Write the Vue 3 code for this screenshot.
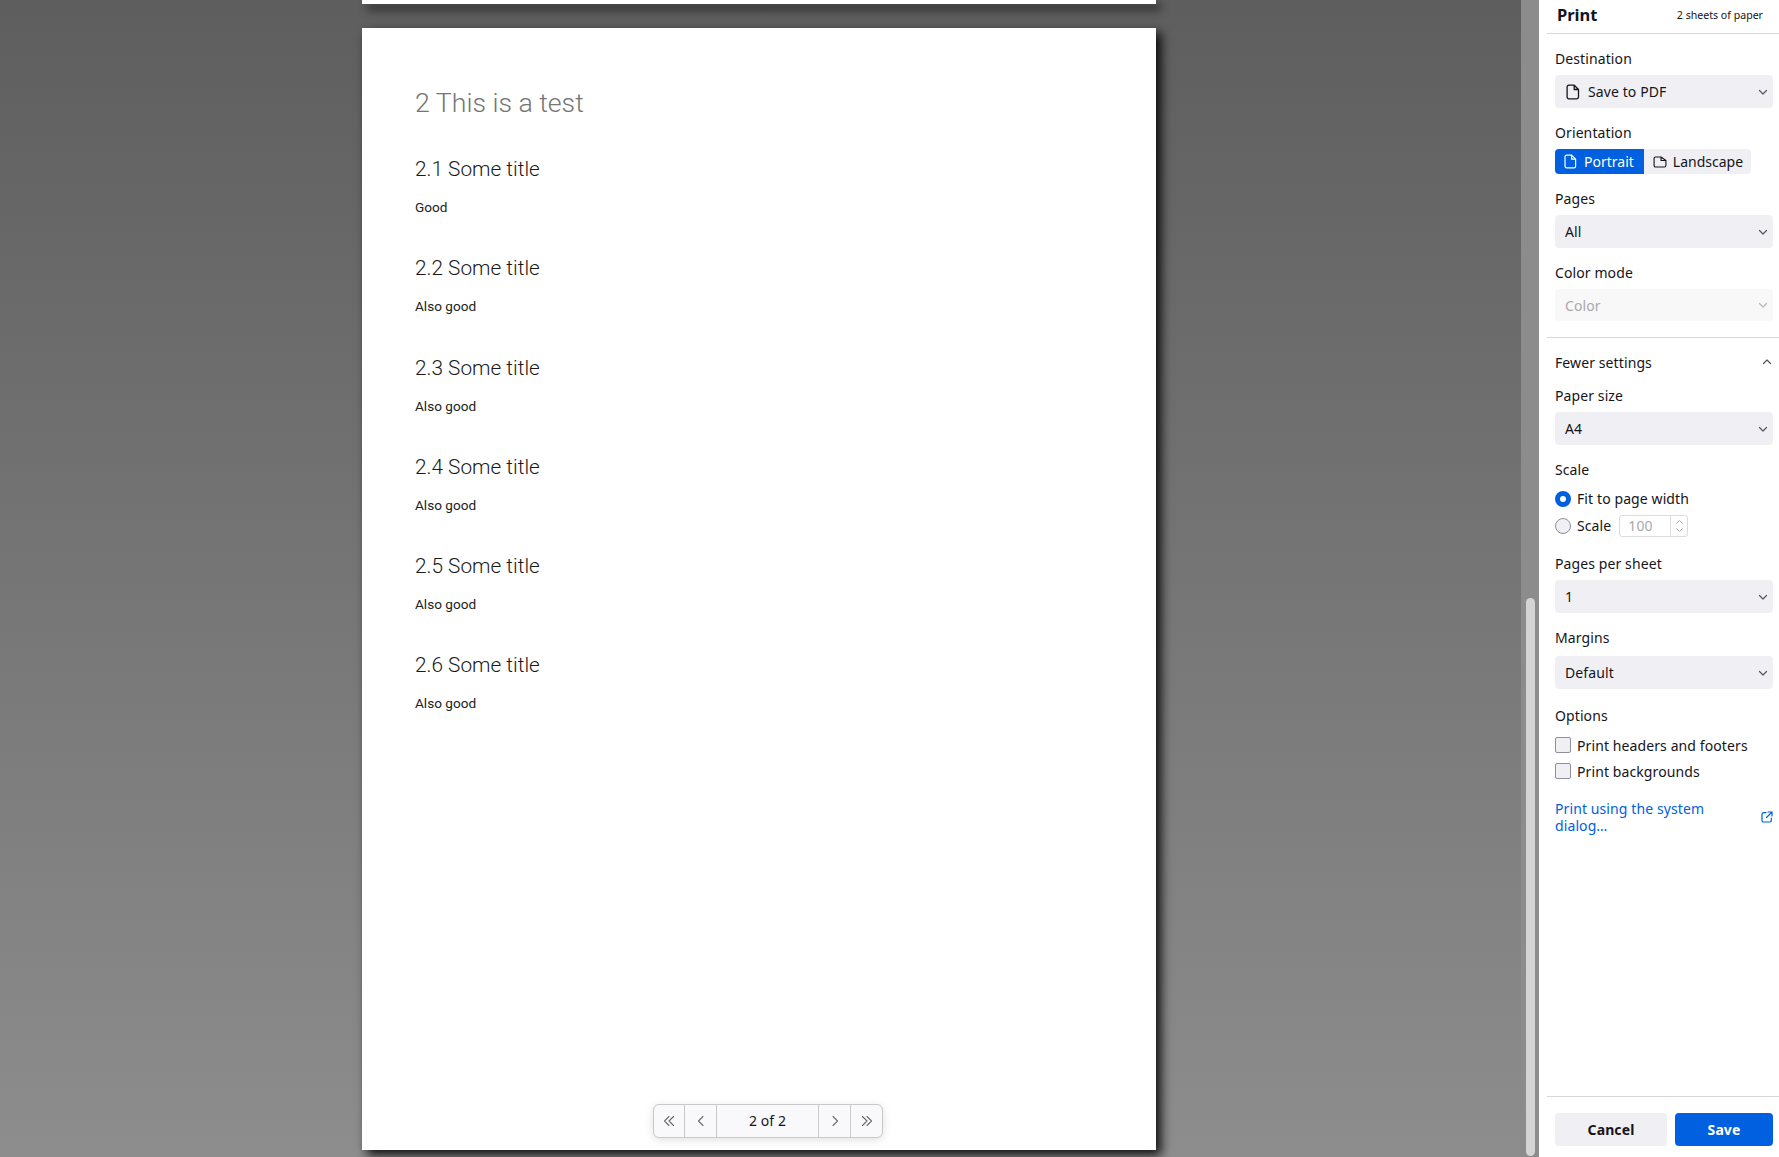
<script setup>
const sections = [
  { title: '2.1 Some title', body: 'Good' },
  { title: '2.2 Some title', body: 'Also good' },
  { title: '2.3 Some title', body: 'Also good' },
  { title: '2.4 Some title', body: 'Also good' },
  { title: '2.5 Some title', body: 'Also good' },
  { title: '2.6 Some title', body: 'Also good' },
]
</script>

<template>
  <div class="app">
    <svg class="defs" width="0" height="0" aria-hidden="true">
      <symbol id="chev" viewBox="0 0 12 12"><path d="M2.5 4.5 6 8l3.5-3.5" fill="none" stroke="currentColor" stroke-width="1.2" stroke-linecap="round" stroke-linejoin="round" /></symbol>
      <symbol id="doc" viewBox="0 0 14 16"><path d="M2.8 1.2h5.4l4.3 4.3v7.6a1.7 1.7 0 0 1-1.7 1.7H2.8a1.7 1.7 0 0 1-1.7-1.7V2.9a1.7 1.7 0 0 1 1.7-1.7Z M8.2 1.2v4.3h4.3" fill="none" stroke="currentColor" stroke-width="1.3" stroke-linejoin="round" /></symbol>
      <symbol id="land" viewBox="0 0 16 14"><path d="M2.8 1.1h6.4l5.7 4.2v5.9a1.7 1.7 0 0 1-1.7 1.7H2.8a1.7 1.7 0 0 1-1.7-1.7V2.8a1.7 1.7 0 0 1 1.7-1.7Z M9.2 1.1v4.2h5.7" fill="none" stroke="currentColor" stroke-width="1.3" stroke-linejoin="round" /></symbol>
    </svg>

    <main class="preview">
      <div class="sheet sheet-prev"></div>
      <article class="sheet">
        <h1>2 This is a test</h1>
        <section v-for="s in sections" :key="s.title" class="sec">
          <h2>{{ s.title }}</h2>
          <p>{{ s.body }}</p>
        </section>
      </article>

      <nav class="pager">
        <button class="pg-btn">
          <svg width="14" height="14" viewBox="0 0 14 14"><path d="M7 2.5 2.5 7 7 11.5M11.5 2.5 7 7l4.5 4.5" fill="none" stroke="currentColor" stroke-width="1.1" stroke-linecap="round" stroke-linejoin="round" /></svg>
        </button>
        <button class="pg-btn">
          <svg width="14" height="14" viewBox="0 0 14 14"><path d="M9 2.5 4.5 7 9 11.5" fill="none" stroke="currentColor" stroke-width="1.1" stroke-linecap="round" stroke-linejoin="round" /></svg>
        </button>
        <span class="pg-label">2 of 2</span>
        <button class="pg-btn">
          <svg width="14" height="14" viewBox="0 0 14 14"><path d="M5 2.5 9.5 7 5 11.5" fill="none" stroke="currentColor" stroke-width="1.1" stroke-linecap="round" stroke-linejoin="round" /></svg>
        </button>
        <button class="pg-btn">
          <svg width="14" height="14" viewBox="0 0 14 14"><path d="M2.5 2.5 7 7l-4.5 4.5M7 2.5 11.5 7 7 11.5" fill="none" stroke="currentColor" stroke-width="1.1" stroke-linecap="round" stroke-linejoin="round" /></svg>
        </button>
      </nav>
    </main>

    <div class="scrollbar"><div class="thumb"></div></div>

    <aside class="panel">
      <header class="head">
        <strong>Print</strong>
        <span>2 sheets of paper</span>
      </header>

      <div class="body">
        <div class="group">
          <label class="lbl">Destination</label>
          <div class="select">
            <svg class="sel-icon" width="14" height="16"><use href="#doc" /></svg>
            <span>Save to PDF</span>
            <svg class="chev" width="12" height="12"><use href="#chev" /></svg>
          </div>
        </div>

        <div class="group">
          <label class="lbl">Orientation</label>
          <div class="orient">
            <button class="orient-btn on">
              <svg width="13" height="15"><use href="#doc" /></svg>Portrait
            </button>
            <button class="orient-btn">
              <svg width="14" height="12"><use href="#land" /></svg>Landscape
            </button>
          </div>
        </div>

        <div class="group">
          <label class="lbl">Pages</label>
          <div class="select"><span>All</span><svg class="chev" width="12" height="12"><use href="#chev" /></svg></div>
        </div>

        <div class="group last">
          <label class="lbl">Color mode</label>
          <div class="select disabled"><span>Color</span><svg class="chev" width="12" height="12"><use href="#chev" /></svg></div>
        </div>
      </div>

      <div class="rule"></div>

      <div class="body more">
        <div class="fewer">
          <span>Fewer settings</span>
          <svg class="chev up" width="12" height="12"><use href="#chev" /></svg>
        </div>

        <div class="group">
          <label class="lbl">Paper size</label>
          <div class="select"><span>A4</span><svg class="chev" width="12" height="12"><use href="#chev" /></svg></div>
        </div>

        <div class="group">
          <label class="lbl tight">Scale</label>
          <div class="row"><span class="radio on"></span>Fit to page width</div>
          <div class="row">
            <span class="radio"></span>Scale
            <span class="num">
              <span class="num-val">100</span>
              <span class="spin">
                <svg width="9" height="6" viewBox="0 0 9 6"><path d="M1.5 4.5 4.5 1.5l3 3" fill="none" stroke="currentColor" stroke-linecap="round" stroke-linejoin="round" /></svg>
                <svg width="9" height="6" viewBox="0 0 9 6"><path d="M1.5 1.5l3 3 3-3" fill="none" stroke="currentColor" stroke-linecap="round" stroke-linejoin="round" /></svg>
              </span>
            </span>
          </div>
        </div>

        <div class="group">
          <label class="lbl">Pages per sheet</label>
          <div class="select"><span>1</span><svg class="chev" width="12" height="12"><use href="#chev" /></svg></div>
        </div>

        <div class="group margins">
          <label class="lbl gap8">Margins</label>
          <div class="select"><span>Default</span><svg class="chev" width="12" height="12"><use href="#chev" /></svg></div>
        </div>

        <div class="group">
          <label class="lbl">Options</label>
          <div class="row check-row"><span class="check"></span>Print headers and footers</div>
          <div class="row check-row"><span class="check"></span>Print backgrounds</div>
        </div>

        <div class="link">
          <span>Print using the system dialog…</span>
          <svg width="12" height="12" viewBox="0 0 12 12"><path d="M5 1.7H2.4A1.4 1.4 0 0 0 1 3.1v6.5A1.4 1.4 0 0 0 2.4 11h6.5a1.4 1.4 0 0 0 1.4-1.4V7M7 1h4v4M11 1 5.5 6.5" fill="none" stroke="currentColor" stroke-width="1.2" stroke-linecap="round" stroke-linejoin="round" /></svg>
        </div>
      </div>

      <footer class="foot">
        <button class="btn">Cancel</button>
        <button class="btn primary">Save</button>
      </footer>
    </aside>
  </div>
</template>

<style>
html, body { margin: 0; height: 100%; overflow: hidden; }
</style>

<style scoped>
.app {
  display: flex;
  width: 1779px;
  height: 1157px;
  overflow: hidden;
  font-family: "Noto Sans", "Open Sans", sans-serif;
  font-size: 14px;
  letter-spacing: 0.1px;
  color: #15141a;
}
.defs { position: absolute; }
button { font: inherit; color: inherit; border: 0; padding: 0; letter-spacing: inherit; }

.preview {
  position: relative;
  flex: 1;
  display: flex;
  flex-direction: column;
  align-items: center;
  gap: 24px;
  padding-right: 3px;
  overflow: hidden;
  background: linear-gradient(to bottom, #5e5e5e, #8d8d8d);
}
.sheet {
  flex: none;
  box-sizing: border-box;
  width: 794px;
  height: 1122px;
  padding: 57px 53px 0;
  background: #fff;
  box-shadow: 5px 5px 10px rgba(0, 0, 0, 0.9);
  font-family: Roboto, sans-serif;
  letter-spacing: 0;
}
.sheet-prev { height: 4px; padding: 0; }
h1 {
  margin: 0 0 33px;
  font-size: 26.7px;
  line-height: 36px;
  font-weight: 300;
  color: #757575;
}
.sec { height: 99.3px; }
h2 {
  margin: 0 0 13px;
  font-size: 20.8px;
  line-height: 30px;
  font-weight: 300;
  color: #1a1a1a;
}
p {
  margin: 0;
  font-size: 13.6px;
  line-height: 20px;
  color: #222;
}

.pager {
  position: absolute;
  left: 653px;
  top: 1104px;
  display: flex;
  height: 34px;
  box-sizing: border-box;
  border: 1px solid #c9c9cc;
  border-radius: 6px;
  background: #f9f9fb;
  box-shadow: 0 2px 8px rgba(0, 0, 0, 0.12);
  overflow: hidden;
  font-family: "Noto Sans", sans-serif;
}
.pg-btn {
  width: 32px;
  display: flex;
  align-items: center;
  justify-content: center;
  background: transparent;
  color: #6a6a72;
  border-right: 1px solid #c9c9cc;
}
.pg-btn:first-child { width: 31px; }
.pg-btn:last-child { width: 31px; border-right: 0; }
.pg-label {
  width: 102px;
  box-sizing: border-box;
  border-right: 1px solid #c9c9cc;
  line-height: 32px;
  text-align: center;
}

.scrollbar {
  flex: none;
  position: relative;
  width: 18px;
  background: #8c8c8c;
}
.thumb {
  position: absolute;
  left: 5px;
  top: 598px;
  bottom: 1px;
  width: 9px;
  border-radius: 5px;
  background: #d4d4d4;
}

.panel {
  flex: none;
  width: 240px;
  display: flex;
  flex-direction: column;
  background: #fff;
}
.head {
  display: flex;
  align-items: center;
  justify-content: space-between;
  height: 33px;
  box-sizing: content-box;
  margin-left: 8px;
  padding: 0 16px 0 10px;
  border-bottom: 1px solid #d7d7db;
}
.head > * { position: relative; top: -2px; }
.head strong { font-size: 16.5px; font-weight: 700; letter-spacing: 0; }
.head span { font-size: 10.6px; letter-spacing: 0; }
.body {
  display: flex;
  flex-direction: column;
  gap: 15px;
  padding: 15px 6px 0 16px;
}
.group { display: flex; flex-direction: column; }
.group.last { padding-bottom: 16px; }
.lbl { height: 20px; line-height: 20px; margin-bottom: 6px; }
.lbl.gap8 { margin-bottom: 8px; }
.lbl.tight { margin-bottom: 5px; }
.select {
  display: flex;
  align-items: center;
  height: 33px;
  padding: 0 4px 0 10px;
  box-sizing: border-box;
  border-radius: 4px;
  background: #f0f0f4;
}
.sel-icon { margin: 0 8px 0 1px; }
.select .chev { margin-left: auto; color: #55555f; }
.select.disabled { height: 32px; background: #f8f8f9; color: #a9a9ad; }
.select.disabled .chev { color: #b5b5b9; }
.orient { display: flex; letter-spacing: 0; }
.orient-btn {
  display: flex;
  align-items: center;
  gap: 6px;
  height: 25px;
  box-sizing: border-box;
  padding: 0 8px 0 9px;
  background: #f0f0f4;
  border-radius: 0 4px 4px 0;
}
.orient-btn.on {
  gap: 7px;
  padding-right: 10px;
  background: #0060df;
  color: #fff;
  border-radius: 4px 0 0 4px;
}
.rule { height: 1px; margin-left: 8px; background: #d7d7db; }
.more { padding-top: 14px; gap: 0; }
.more .group { margin-bottom: 15px; }
.more .group.margins { margin-bottom: 17px; }
.fewer {
  display: flex;
  align-items: center;
  justify-content: space-between;
  height: 20px;
  margin-bottom: 14px;
}
.fewer .chev { color: #55555f; }
.chev.up { transform: rotate(180deg); }
.row {
  display: flex;
  align-items: center;
  height: 27px;
  gap: 6px;
}
.radio {
  flex: none;
  width: 16px;
  height: 16px;
  box-sizing: border-box;
  border: 1px solid #8f8f9d;
  border-radius: 50%;
  background: #f0f0f4;
}
.radio.on { border: 5px solid #0060df; background: #fff; }
.num {
  display: flex;
  width: 69px;
  height: 22px;
  margin-left: 2px;
  box-sizing: border-box;
  border: 1px solid #dcdcde;
  border-radius: 3px;
  color: #a9a9ad;
}
.num-val { flex: 1; padding-left: 8px; line-height: 20px; }
.spin {
  width: 16px;
  display: flex;
  flex-direction: column;
  align-items: center;
  justify-content: center;
  gap: 2px;
  border-left: 1px solid #dcdcde;
  color: #b5b5b9;
}
.check {
  flex: none;
  width: 16px;
  height: 16px;
  box-sizing: border-box;
  border: 1px solid #8f8f9d;
  border-radius: 2px;
  background: #f0f0f4;
}
.check-row { height: 26px; }
.link {
  display: flex;
  align-items: center;
  justify-content: space-between;
  margin-top: 1px;
  color: #0060df;
  line-height: 17px;
}
.link span { width: 170px; }
.foot {
  display: flex;
  gap: 8px;
  margin-top: auto;
  margin-left: 8px;
  padding: 16px 6px 11px 8px;
  border-top: 1px solid #d7d7db;
}
.btn {
  height: 33px;
  border-radius: 4px;
  background: #f0f0f4;
  font-weight: 700;
  flex: 112;
}
.btn.primary { background: #0060df; color: #fff; flex: 98; }
</style>
